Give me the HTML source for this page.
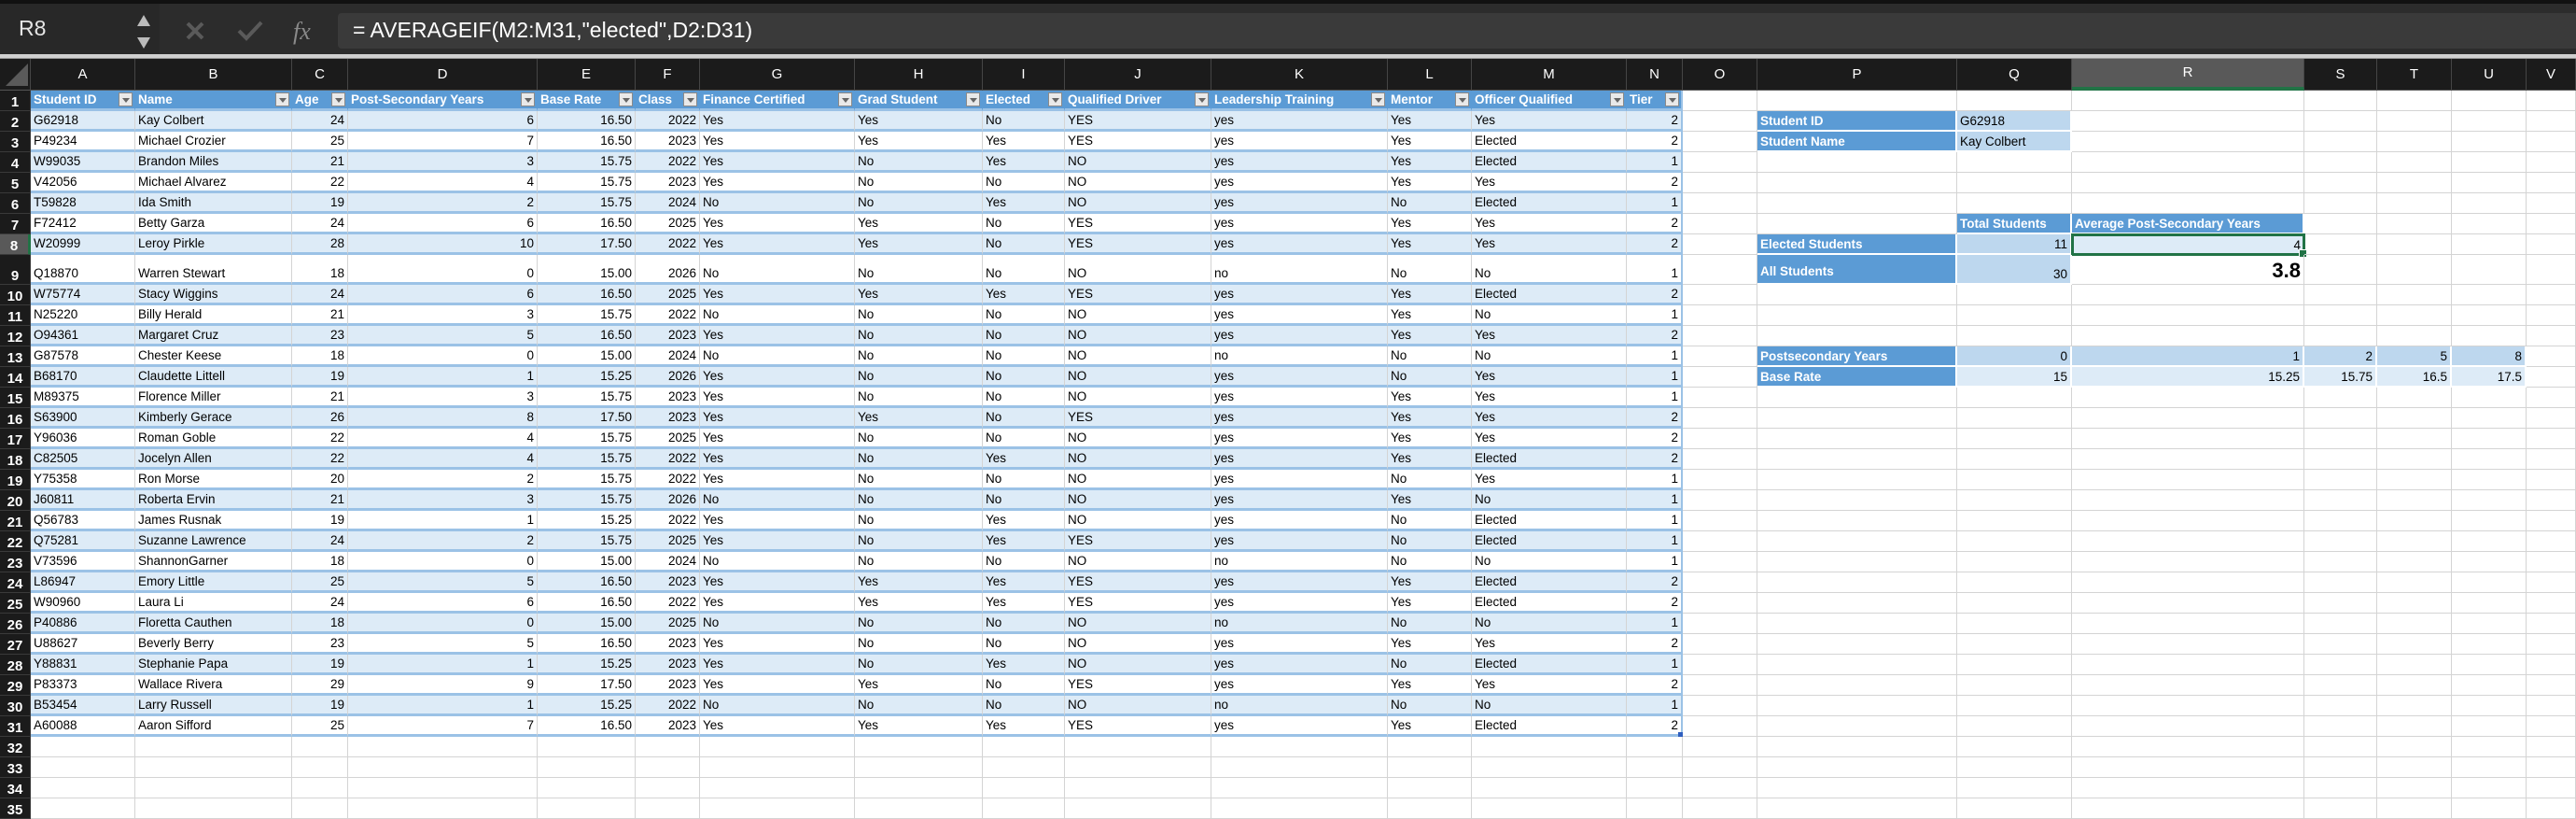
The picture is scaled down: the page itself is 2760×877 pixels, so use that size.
<!DOCTYPE html>
<html><head><meta charset="utf-8"><style>
*{margin:0;padding:0}
body{width:2760px;height:858px;overflow:hidden;background:#fff;position:relative;font-family:"Liberation Sans",sans-serif}
#fb{position:absolute;left:0;top:0;width:2760px;height:58px;background:#2c2c2c;border-top:4px solid #111;box-sizing:border-box}
#sep{position:absolute;left:0;top:58px;width:2760px;height:5px;background:#d0d0d0;border-bottom:1px solid #999;box-sizing:border-box}
#nb{position:absolute;left:0;top:4px;width:171px;height:54px;background:#282828}
#nbt{position:absolute;left:20px;top:17px;font-size:23px;color:#e6e6e6}
#inp{position:absolute;left:362px;top:14px;width:2398px;height:38px;background:#3a3a3a;border-radius:4px 0 0 4px}
#inpt{position:absolute;left:378px;top:19px;font-size:23px;color:#fff}
table{position:absolute;left:0;top:63px;border-collapse:separate;border-spacing:0;table-layout:fixed;width:2760px}
td,th{box-sizing:border-box;height:22px;border-right:1px solid #d4d4d4;border-bottom:1px solid #d4d4d4;padding:0 3px 1px;font-size:13.5px;line-height:17px;vertical-align:bottom;white-space:nowrap;overflow:hidden;text-align:left;color:#000;font-weight:normal;position:relative}
tr.ch th,tr.ch td{height:34px;background:#1b1b1b;color:#fff;text-align:center;vertical-align:middle;font-size:15px;border-right:1px solid #454545;border-bottom:1px solid #555}
tr.ch td.sel{background:#595959;border-bottom:4px solid #217346}
th.rh{background:#1b1b1b;color:#fff;text-align:center;font-size:15px;font-weight:bold;border-right:1px solid #3a3a3a;border-bottom:1px solid #3a3a3a;padding:0}
th.rh.act{background:#595959;border-right:3px solid #217346}
tr.t td:nth-child(-n+15){border-bottom:3px solid #9bc2e6}
tr.b td:nth-child(-n+15){background:#ddebf7}
tr.h td:nth-child(-n+15){background:#5b9bd5;color:#fff;font-weight:bold;border-right:1px solid #5b9bd5}
tr.t td:nth-child(15){border-right:2px solid #9bc2e6}
.r{text-align:right}
.fb{position:absolute;right:2px;bottom:2px;width:15px;height:15px;background:#e9e9e9;border:1px solid #8a8a8a;box-sizing:border-box}
.fb:after{content:"";position:absolute;left:3px;top:5px;border-left:4px solid transparent;border-right:4px solid transparent;border-top:5px solid #666}
td.ph{background:#5b9bd5 !important;color:#fff !important;font-weight:bold;border-right:2px solid #fff;border-bottom:2px solid #fff}
td.q{background:#bdd7ee;border-bottom:2px solid #fff;border-right:2px solid #fff}
td.lq{background:#ddebf7;border-bottom:2px solid #fff;border-right:2px solid #fff}
td.cur{background:#ddebf7;outline:3px solid #217346;outline-offset:-2px}
.hd{position:absolute;right:-4px;bottom:-4px;width:7px;height:7px;background:#217346;border:1px solid #fff}
td.big{font-size:22px;font-weight:bold;line-height:26px}
</style></head><body>
<div id="fb"></div>
<div id="nb"></div>
<div id="nbt">R8</div>
<svg style="position:absolute;left:145px;top:14px" width="18" height="40"><path d="M9 2 L16 14 L2 14Z" fill="#bbb"/><path d="M2 26 L16 26 L9 38Z" fill="#bbb"/></svg>
<svg style="position:absolute;left:198px;top:22px" width="180" height="26"><path d="M3 3 L19 19 M19 3 L3 19" stroke="#5a5a5a" stroke-width="4"/><path d="M58 11 L66 19 L82 2" stroke="#5a5a5a" stroke-width="4" fill="none"/><text x="116" y="20" font-family="Liberation Serif" font-style="italic" font-size="26" fill="#8a8a8a">fx</text></svg>
<div id="inp"></div>
<div id="inpt">= AVERAGEIF(M2:M31,"elected",D2:D31)</div>
<div id="sep"></div>
<table>
<colgroup><col style="width:33px"><col style="width:112px"><col style="width:168px"><col style="width:60px"><col style="width:203px"><col style="width:105px"><col style="width:69px"><col style="width:166px"><col style="width:137px"><col style="width:88px"><col style="width:157px"><col style="width:189px"><col style="width:90px"><col style="width:166px"><col style="width:60px"><col style="width:80px"><col style="width:214px"><col style="width:123px"><col style="width:249px"><col style="width:78px"><col style="width:80px"><col style="width:80px"><col style="width:53px"></colgroup>
<tr class="ch"><th style="background:#1b1b1b"><svg width="28" height="28" style="position:absolute;left:4px;top:3px"><path d="M26 2 L26 26 L2 26Z" fill="#5a5a5a"/></svg></th><td>A</td><td>B</td><td>C</td><td>D</td><td>E</td><td>F</td><td>G</td><td>H</td><td>I</td><td>J</td><td>K</td><td>L</td><td>M</td><td>N</td><td>O</td><td>P</td><td>Q</td><td class="sel">R</td><td>S</td><td>T</td><td>U</td><td>V</td></tr>
<tr class="t h"><th class="rh">1</th><td>Student ID<span class="fb"></span></td><td>Name<span class="fb"></span></td><td>Age<span class="fb"></span></td><td>Post-Secondary Years<span class="fb"></span></td><td>Base Rate<span class="fb"></span></td><td>Class<span class="fb"></span></td><td>Finance Certified<span class="fb"></span></td><td>Grad Student<span class="fb"></span></td><td>Elected<span class="fb"></span></td><td>Qualified Driver<span class="fb"></span></td><td>Leadership Training<span class="fb"></span></td><td>Mentor<span class="fb"></span></td><td>Officer Qualified<span class="fb"></span></td><td>Tier<span class="fb"></span></td><td></td><td></td><td></td><td></td><td></td><td></td><td></td><td></td></tr>
<tr class="t b"><th class="rh">2</th><td>G62918</td><td>Kay Colbert</td><td class="r">24</td><td class="r">6</td><td class="r">16.50</td><td class="r">2022</td><td>Yes</td><td>Yes</td><td>No</td><td>YES</td><td>yes</td><td>Yes</td><td>Yes</td><td class="r">2</td><td></td><td class="ph">Student ID</td><td class="q">G62918</td><td></td><td></td><td></td><td></td><td></td></tr>
<tr class="t"><th class="rh">3</th><td>P49234</td><td>Michael Crozier</td><td class="r">25</td><td class="r">7</td><td class="r">16.50</td><td class="r">2023</td><td>Yes</td><td>Yes</td><td>Yes</td><td>YES</td><td>yes</td><td>Yes</td><td>Elected</td><td class="r">2</td><td></td><td class="ph">Student Name</td><td class="q">Kay Colbert</td><td></td><td></td><td></td><td></td><td></td></tr>
<tr class="t b"><th class="rh">4</th><td>W99035</td><td>Brandon Miles</td><td class="r">21</td><td class="r">3</td><td class="r">15.75</td><td class="r">2022</td><td>Yes</td><td>No</td><td>Yes</td><td>NO</td><td>yes</td><td>Yes</td><td>Elected</td><td class="r">1</td><td></td><td></td><td></td><td></td><td></td><td></td><td></td><td></td></tr>
<tr class="t"><th class="rh">5</th><td>V42056</td><td>Michael Alvarez</td><td class="r">22</td><td class="r">4</td><td class="r">15.75</td><td class="r">2023</td><td>Yes</td><td>No</td><td>No</td><td>NO</td><td>yes</td><td>Yes</td><td>Yes</td><td class="r">2</td><td></td><td></td><td></td><td></td><td></td><td></td><td></td><td></td></tr>
<tr class="t b"><th class="rh">6</th><td>T59828</td><td>Ida Smith</td><td class="r">19</td><td class="r">2</td><td class="r">15.75</td><td class="r">2024</td><td>No</td><td>No</td><td>Yes</td><td>NO</td><td>yes</td><td>No</td><td>Elected</td><td class="r">1</td><td></td><td></td><td></td><td></td><td></td><td></td><td></td><td></td></tr>
<tr class="t"><th class="rh">7</th><td>F72412</td><td>Betty Garza</td><td class="r">24</td><td class="r">6</td><td class="r">16.50</td><td class="r">2025</td><td>Yes</td><td>Yes</td><td>No</td><td>YES</td><td>yes</td><td>Yes</td><td>Yes</td><td class="r">2</td><td></td><td></td><td class="ph">Total Students</td><td class="ph">Average Post-Secondary Years</td><td></td><td></td><td></td><td></td></tr>
<tr class="t b"><th class="rh act">8</th><td>W20999</td><td>Leroy Pirkle</td><td class="r">28</td><td class="r">10</td><td class="r">17.50</td><td class="r">2022</td><td>Yes</td><td>Yes</td><td>No</td><td>YES</td><td>yes</td><td>Yes</td><td>Yes</td><td class="r">2</td><td></td><td class="ph">Elected Students</td><td class="q r">11</td><td class="cur r" style="overflow:visible">4<span class="hd"></span></td><td></td><td></td><td></td><td></td></tr>
<tr class="t" style="height:32px"><th class="rh" style="height:32px">9</th><td style="height:32px">Q18870</td><td>Warren Stewart</td><td class="r">18</td><td class="r">0</td><td class="r">15.00</td><td class="r">2026</td><td>No</td><td>No</td><td>No</td><td>NO</td><td>no</td><td>No</td><td>No</td><td class="r">1</td><td></td><td class="ph" style="line-height:22px">All Students</td><td class="q r">30</td><td class="r big">3.8</td><td></td><td></td><td></td><td></td></tr>
<tr class="t b"><th class="rh">10</th><td>W75774</td><td>Stacy Wiggins</td><td class="r">24</td><td class="r">6</td><td class="r">16.50</td><td class="r">2025</td><td>Yes</td><td>Yes</td><td>Yes</td><td>YES</td><td>yes</td><td>Yes</td><td>Elected</td><td class="r">2</td><td></td><td></td><td></td><td></td><td></td><td></td><td></td><td></td></tr>
<tr class="t"><th class="rh">11</th><td>N25220</td><td>Billy Herald</td><td class="r">21</td><td class="r">3</td><td class="r">15.75</td><td class="r">2022</td><td>No</td><td>No</td><td>No</td><td>NO</td><td>yes</td><td>Yes</td><td>No</td><td class="r">1</td><td></td><td></td><td></td><td></td><td></td><td></td><td></td><td></td></tr>
<tr class="t b"><th class="rh">12</th><td>O94361</td><td>Margaret Cruz</td><td class="r">23</td><td class="r">5</td><td class="r">16.50</td><td class="r">2023</td><td>Yes</td><td>No</td><td>No</td><td>NO</td><td>yes</td><td>Yes</td><td>Yes</td><td class="r">2</td><td></td><td></td><td></td><td></td><td></td><td></td><td></td><td></td></tr>
<tr class="t"><th class="rh">13</th><td>G87578</td><td>Chester Keese</td><td class="r">18</td><td class="r">0</td><td class="r">15.00</td><td class="r">2024</td><td>No</td><td>No</td><td>No</td><td>NO</td><td>no</td><td>No</td><td>No</td><td class="r">1</td><td></td><td class="ph">Postsecondary Years</td><td class="q r">0</td><td class="q r">1</td><td class="q r">2</td><td class="q r">5</td><td class="q r">8</td><td></td></tr>
<tr class="t b"><th class="rh">14</th><td>B68170</td><td>Claudette Littell</td><td class="r">19</td><td class="r">1</td><td class="r">15.25</td><td class="r">2026</td><td>Yes</td><td>No</td><td>No</td><td>NO</td><td>yes</td><td>No</td><td>Yes</td><td class="r">1</td><td></td><td class="ph">Base Rate</td><td class="lq r">15</td><td class="lq r">15.25</td><td class="lq r">15.75</td><td class="lq r">16.5</td><td class="lq r">17.5</td><td></td></tr>
<tr class="t"><th class="rh">15</th><td>M89375</td><td>Florence Miller</td><td class="r">21</td><td class="r">3</td><td class="r">15.75</td><td class="r">2023</td><td>Yes</td><td>No</td><td>No</td><td>NO</td><td>yes</td><td>Yes</td><td>Yes</td><td class="r">1</td><td></td><td></td><td></td><td></td><td></td><td></td><td></td><td></td></tr>
<tr class="t b"><th class="rh">16</th><td>S63900</td><td>Kimberly Gerace</td><td class="r">26</td><td class="r">8</td><td class="r">17.50</td><td class="r">2023</td><td>Yes</td><td>Yes</td><td>No</td><td>YES</td><td>yes</td><td>Yes</td><td>Yes</td><td class="r">2</td><td></td><td></td><td></td><td></td><td></td><td></td><td></td><td></td></tr>
<tr class="t"><th class="rh">17</th><td>Y96036</td><td>Roman Goble</td><td class="r">22</td><td class="r">4</td><td class="r">15.75</td><td class="r">2025</td><td>Yes</td><td>No</td><td>No</td><td>NO</td><td>yes</td><td>Yes</td><td>Yes</td><td class="r">2</td><td></td><td></td><td></td><td></td><td></td><td></td><td></td><td></td></tr>
<tr class="t b"><th class="rh">18</th><td>C82505</td><td>Jocelyn Allen</td><td class="r">22</td><td class="r">4</td><td class="r">15.75</td><td class="r">2022</td><td>Yes</td><td>No</td><td>Yes</td><td>NO</td><td>yes</td><td>Yes</td><td>Elected</td><td class="r">2</td><td></td><td></td><td></td><td></td><td></td><td></td><td></td><td></td></tr>
<tr class="t"><th class="rh">19</th><td>Y75358</td><td>Ron Morse</td><td class="r">20</td><td class="r">2</td><td class="r">15.75</td><td class="r">2022</td><td>Yes</td><td>No</td><td>No</td><td>NO</td><td>yes</td><td>No</td><td>Yes</td><td class="r">1</td><td></td><td></td><td></td><td></td><td></td><td></td><td></td><td></td></tr>
<tr class="t b"><th class="rh">20</th><td>J60811</td><td>Roberta Ervin</td><td class="r">21</td><td class="r">3</td><td class="r">15.75</td><td class="r">2026</td><td>No</td><td>No</td><td>No</td><td>NO</td><td>yes</td><td>Yes</td><td>No</td><td class="r">1</td><td></td><td></td><td></td><td></td><td></td><td></td><td></td><td></td></tr>
<tr class="t"><th class="rh">21</th><td>Q56783</td><td>James Rusnak</td><td class="r">19</td><td class="r">1</td><td class="r">15.25</td><td class="r">2022</td><td>Yes</td><td>No</td><td>Yes</td><td>NO</td><td>yes</td><td>No</td><td>Elected</td><td class="r">1</td><td></td><td></td><td></td><td></td><td></td><td></td><td></td><td></td></tr>
<tr class="t b"><th class="rh">22</th><td>Q75281</td><td>Suzanne Lawrence</td><td class="r">24</td><td class="r">2</td><td class="r">15.75</td><td class="r">2025</td><td>Yes</td><td>No</td><td>Yes</td><td>YES</td><td>yes</td><td>No</td><td>Elected</td><td class="r">1</td><td></td><td></td><td></td><td></td><td></td><td></td><td></td><td></td></tr>
<tr class="t"><th class="rh">23</th><td>V73596</td><td>ShannonGarner</td><td class="r">18</td><td class="r">0</td><td class="r">15.00</td><td class="r">2024</td><td>No</td><td>No</td><td>No</td><td>NO</td><td>no</td><td>No</td><td>No</td><td class="r">1</td><td></td><td></td><td></td><td></td><td></td><td></td><td></td><td></td></tr>
<tr class="t b"><th class="rh">24</th><td>L86947</td><td>Emory Little</td><td class="r">25</td><td class="r">5</td><td class="r">16.50</td><td class="r">2023</td><td>Yes</td><td>Yes</td><td>Yes</td><td>YES</td><td>yes</td><td>Yes</td><td>Elected</td><td class="r">2</td><td></td><td></td><td></td><td></td><td></td><td></td><td></td><td></td></tr>
<tr class="t"><th class="rh">25</th><td>W90960</td><td>Laura Li</td><td class="r">24</td><td class="r">6</td><td class="r">16.50</td><td class="r">2022</td><td>Yes</td><td>Yes</td><td>Yes</td><td>YES</td><td>yes</td><td>Yes</td><td>Elected</td><td class="r">2</td><td></td><td></td><td></td><td></td><td></td><td></td><td></td><td></td></tr>
<tr class="t b"><th class="rh">26</th><td>P40886</td><td>Floretta Cauthen</td><td class="r">18</td><td class="r">0</td><td class="r">15.00</td><td class="r">2025</td><td>No</td><td>No</td><td>No</td><td>NO</td><td>no</td><td>No</td><td>No</td><td class="r">1</td><td></td><td></td><td></td><td></td><td></td><td></td><td></td><td></td></tr>
<tr class="t"><th class="rh">27</th><td>U88627</td><td>Beverly Berry</td><td class="r">23</td><td class="r">5</td><td class="r">16.50</td><td class="r">2023</td><td>Yes</td><td>No</td><td>No</td><td>NO</td><td>yes</td><td>Yes</td><td>Yes</td><td class="r">2</td><td></td><td></td><td></td><td></td><td></td><td></td><td></td><td></td></tr>
<tr class="t b"><th class="rh">28</th><td>Y88831</td><td>Stephanie Papa</td><td class="r">19</td><td class="r">1</td><td class="r">15.25</td><td class="r">2023</td><td>Yes</td><td>No</td><td>Yes</td><td>NO</td><td>yes</td><td>No</td><td>Elected</td><td class="r">1</td><td></td><td></td><td></td><td></td><td></td><td></td><td></td><td></td></tr>
<tr class="t"><th class="rh">29</th><td>P83373</td><td>Wallace Rivera</td><td class="r">29</td><td class="r">9</td><td class="r">17.50</td><td class="r">2023</td><td>Yes</td><td>Yes</td><td>No</td><td>YES</td><td>yes</td><td>Yes</td><td>Yes</td><td class="r">2</td><td></td><td></td><td></td><td></td><td></td><td></td><td></td><td></td></tr>
<tr class="t b"><th class="rh">30</th><td>B53454</td><td>Larry Russell</td><td class="r">19</td><td class="r">1</td><td class="r">15.25</td><td class="r">2022</td><td>No</td><td>No</td><td>No</td><td>NO</td><td>no</td><td>No</td><td>No</td><td class="r">1</td><td></td><td></td><td></td><td></td><td></td><td></td><td></td><td></td></tr>
<tr class="t"><th class="rh">31</th><td>A60088</td><td>Aaron Sifford</td><td class="r">25</td><td class="r">7</td><td class="r">16.50</td><td class="r">2023</td><td>Yes</td><td>Yes</td><td>Yes</td><td>YES</td><td>yes</td><td>Yes</td><td>Elected</td><td class="r" style="overflow:visible">2<span style="position:absolute;right:-2px;bottom:-3px;width:5px;height:5px;background:#2f5fbf"></span></td><td></td><td></td><td></td><td></td><td></td><td></td><td></td><td></td></tr>
<tr><th class="rh">32</th><td></td><td></td><td></td><td></td><td></td><td></td><td></td><td></td><td></td><td></td><td></td><td></td><td></td><td></td><td></td><td></td><td></td><td></td><td></td><td></td><td></td><td></td></tr>
<tr><th class="rh">33</th><td></td><td></td><td></td><td></td><td></td><td></td><td></td><td></td><td></td><td></td><td></td><td></td><td></td><td></td><td></td><td></td><td></td><td></td><td></td><td></td><td></td><td></td></tr>
<tr><th class="rh">34</th><td></td><td></td><td></td><td></td><td></td><td></td><td></td><td></td><td></td><td></td><td></td><td></td><td></td><td></td><td></td><td></td><td></td><td></td><td></td><td></td><td></td><td></td></tr>
<tr><th class="rh">35</th><td></td><td></td><td></td><td></td><td></td><td></td><td></td><td></td><td></td><td></td><td></td><td></td><td></td><td></td><td></td><td></td><td></td><td></td><td></td><td></td><td></td><td></td></tr>
</table>
</body></html>
